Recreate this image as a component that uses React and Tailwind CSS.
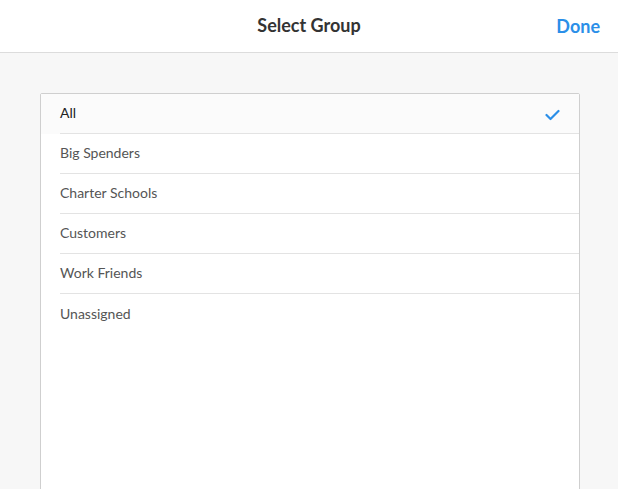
import React from 'react';

const groups = ['All', 'Big Spenders', 'Charter Schools', 'Customers', 'Work Friends', 'Unassigned'];

const App = () => {
  const selected = 'All';

  return (
    <div className="w-[618px] h-[489px] overflow-hidden bg-[#f7f7f7] flex flex-col" style={{ fontFamily: 'Lato, "Open Sans", sans-serif' }}>
      {/* Header */}
      <div className="h-[53px] shrink-0 bg-white border-b border-[#dcdcdc] flex items-center relative">
        <h1 className="flex-1 text-center text-[18px] font-bold text-[#333] -mt-[1px]">Select Group</h1>
        <button className="absolute right-[18px] top-[13px] text-[18px] font-bold text-[#2b8fe8]">Done</button>
      </div>

      {/* List */}
      <div className="flex-1 pt-10 pl-10 pr-[38px]">
        <div className="h-[calc(100%+8px)] bg-white border border-[#cfcfcf] rounded-t-[2px]">
          {groups.map((g, i) => (
            <div key={g} className={`pl-[19px] ${g === selected ? 'bg-[#fbfbfb]' : ''}`}>
              <div className={`h-10 flex items-center pr-[19px] ${i < groups.length - 1 ? 'border-b border-[#e3e3e3]' : ''}`}>
                <span className={`flex-1 text-[14px] -mt-[2px] ${g === selected ? 'text-[#222]' : 'text-[#555]'}`}>{g}</span>
                {g === selected && (
                  <svg width="15" height="12" viewBox="0 0 15 12" fill="none" className="mt-[3px]">
                    <path d="M1.5 6 L5.5 10 L13.5 2" stroke="#2b8fe8" strokeWidth="2.2" strokeLinecap="round" strokeLinejoin="round" />
                  </svg>
                )}
              </div>
            </div>
          ))}
        </div>
      </div>
    </div>
  );
};

export default App;
